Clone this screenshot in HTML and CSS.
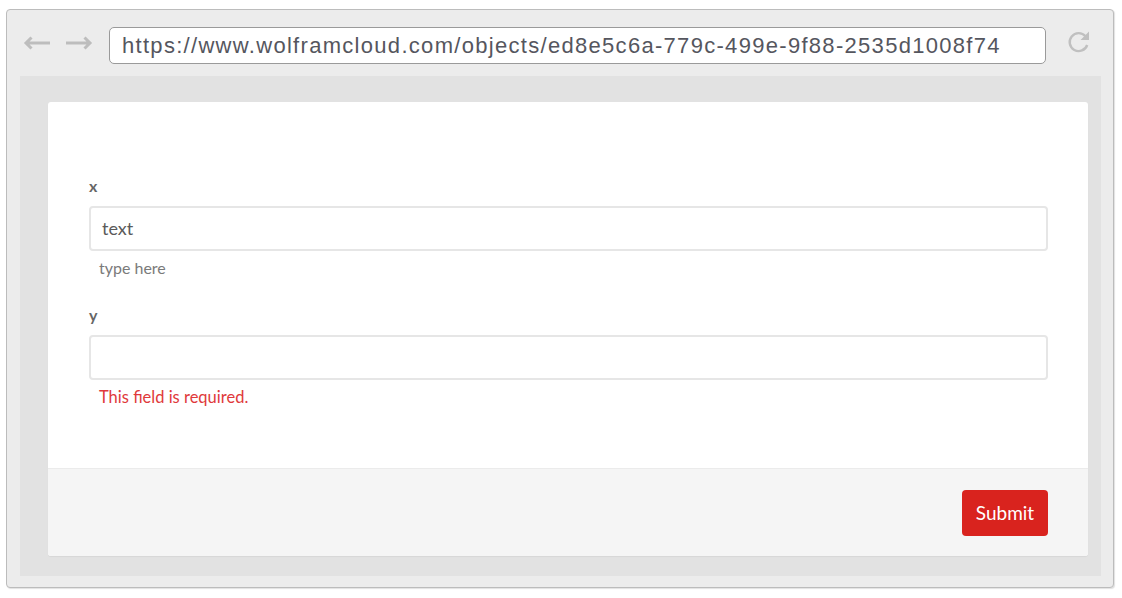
FILE: index.html
```html
<!DOCTYPE html>
<html>
<head>
<meta charset="utf-8">
<link rel="stylesheet" href="styles.css">
</head>
<body>
<div class="window">
  <div class="toolbar">
    <div class="nav">
      <svg class="arrow" width="28" height="14" viewBox="0 0 28 14"><path d="M27 7H3M8.5 1.5L3 7l5.5 5.5" fill="none" stroke="#bdbdbd" stroke-width="3"/></svg>
      <svg class="arrow" width="28" height="14" viewBox="0 0 28 14"><path d="M1 7h24M19.5 1.5L25 7l-5.5 5.5" fill="none" stroke="#bdbdbd" stroke-width="3"/></svg>
    </div>
    <div class="url">https://www.wolframcloud.com/objects/ed8e5c6a-779c-499e-9f88-2535d1008f74</div>
    <svg class="reload" width="26" height="24" viewBox="0 0 26 24"><path d="M19.5 6.2A9 9 0 1 0 21.2 15" fill="none" stroke="#c0c0c0" stroke-width="2.4"/><path d="M23 1.5V10h-8.5z" fill="#c0c0c0"/></svg>
  </div>
  <div class="viewport">
    <div class="card">
      <div class="card-body">
        <div class="field">
          <div class="label">x</div>
          <div class="input"><span class="value">text</span></div>
          <div class="help">type here</div>
        </div>
        <div class="field">
          <div class="label">y</div>
          <div class="input"></div>
          <div class="help error">This field is required.</div>
        </div>
      </div>
      <div class="card-footer">
        <button class="submit">Submit</button>
      </div>
    </div>
  </div>
</div>
</body>
</html>
```
FILE: styles.css
```css
html, body {
  margin: 0;
  padding: 0;
  background: #ffffff;
}
body {
  width: 1122px;
  height: 598px;
  overflow: hidden;
}
.window {
  box-sizing: border-box;
  margin: 9px 0 0 6px;
  width: 1108px;
  height: 579px;
  border: 1px solid #bcbcbc;
  border-radius: 4px;
  background: #ececec;
  box-shadow: 1px 1px 1px rgba(0,0,0,0.12);
  display: flex;
  flex-direction: column;
}
.toolbar {
  height: 66px;
  flex: none;
  display: flex;
  align-items: center;
  padding: 4px 0 0 16px;
  box-sizing: border-box;
}
.nav {
  display: flex;
  gap: 14px;
  width: 86px;
  margin-top: -4px;
}
.arrow { display: block; }
.url {
  box-sizing: border-box;
  width: 937px;
  height: 37px;
  border: 1px solid #9a9a9a;
  border-radius: 5px;
  background: #fff;
  font-family: "Liberation Sans", Arial, sans-serif;
  font-size: 22px;
  letter-spacing: 1.3px;
  color: #55565e;
  line-height: 35px;
  padding-left: 12px;
  white-space: nowrap;
  overflow: hidden;
}
.reload {
  display: block;
  margin-left: 20px;
  margin-top: -6px;
}
.viewport {
  flex: 1;
  margin: 0 12px 11px 13px;
  background: #e2e2e2;
  padding: 26px 13px 20px 28px;
  display: flex;
}
.card {
  flex: 1;
  background: #fff;
  border-radius: 3px;
  box-shadow: 0 1px 1px rgba(0,0,0,0.05);
  display: flex;
  flex-direction: column;
  font-family: Lato, "Open Sans", sans-serif;
}
.card-body {
  flex: 1;
  padding: 74px 40px 0 41px;
}
.field {
  margin-bottom: 27px;
}
.label {
  font-size: 16px;
  font-weight: bold;
  color: #666;
  line-height: 20px;
  margin-bottom: 10px;
}
.input {
  box-sizing: border-box;
  height: 45px;
  border: 2px solid #e6e6e6;
  border-radius: 4px;
  padding-left: 11px;
  line-height: 41px;
  font-size: 18px;
  color: #5a5a5a;
}
.help {
  font-size: 16px;
  color: #7a7a7a;
  line-height: 20px;
  margin-top: 7px;
  padding-left: 10px;
}
.error {
  font-size: 16.5px;
  color: #e0393b;
}
.card-footer {
  height: 88px;
  box-sizing: border-box;
  background: #f5f5f5;
  border-top: 1px solid #ebebeb;
  border-radius: 0 0 3px 3px;
  display: flex;
  justify-content: flex-end;
  align-items: center;
  padding-right: 40px;
}
.submit {
  width: 86px;
  height: 46px;
  border: none;
  border-radius: 4px;
  background: #d9231e;
  color: #fff;
  font-family: Lato, "Open Sans", sans-serif;
  font-size: 19px;
  padding: 0;
  margin-top: 0;
}
```
